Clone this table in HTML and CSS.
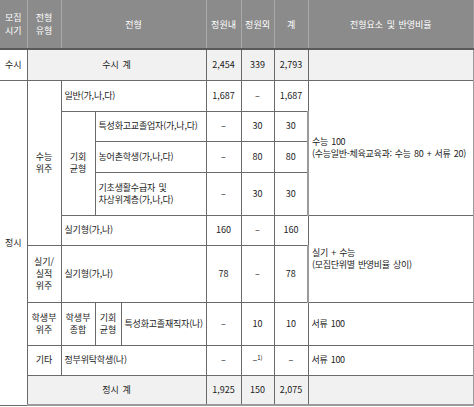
FILE: index.html
```html
<!DOCTYPE html>
<html lang="ko">
<head>
<meta charset="utf-8">
<link rel="stylesheet" href="styles.css">
</head>
<body>
<table class="tbl">
  <colgroup>
    <col class="w27"><col class="w34"><col class="w34"><col class="w26"><col class="w85">
    <col class="w35"><col class="w33"><col class="w34"><col class="w164">
  </colgroup>
  <thead>
    <tr class="h-head">
      <th>모집<br>시기</th>
      <th>전형<br>유형</th>
      <th colspan="3">전형</th>
      <th>정원내</th>
      <th>정원외</th>
      <th>계</th>
      <th>전형요소 및 반영비율</th>
    </tr>
  </thead>
  <tbody>
    <tr class="h31">
      <td class="c">수시</td>
      <td class="c sum" colspan="4">수시 계</td>
      <td class="c sum">2,454</td>
      <td class="c sum">339</td>
      <td class="c sum">2,793</td>
      <td class="sum"></td>
    </tr>
    <tr class="h31">
      <td class="c" rowspan="10">정시</td>
      <td class="c" rowspan="5">수능<br>위주</td>
      <td class="l" colspan="3">일반(가,나,다)</td>
      <td class="c">1,687</td>
      <td class="c">–</td>
      <td class="c">1,687</td>
      <td class="l note" rowspan="4">수능 100<br>(수능일반-체육교육과: 수능 80 + 서류 20)</td>
    </tr>
    <tr class="h30">
      <td class="c" rowspan="3">기회<br>균형</td>
      <td class="l" colspan="2">특성화고교졸업자(가,나,다)</td>
      <td class="c">–</td>
      <td class="c">30</td>
      <td class="c">30</td>
    </tr>
    <tr class="h31">
      <td class="l" colspan="2">농어촌학생(가,나,다)</td>
      <td class="c">–</td>
      <td class="c">80</td>
      <td class="c">80</td>
    </tr>
    <tr class="h43">
      <td class="l" colspan="2">기초생활수급자 및<br>차상위계층(가,나,다)</td>
      <td class="c">–</td>
      <td class="c">30</td>
      <td class="c">30</td>
    </tr>
    <tr class="h30">
      <td class="l" colspan="3">실기형(가,나)</td>
      <td class="c">160</td>
      <td class="c">–</td>
      <td class="c">160</td>
      <td class="l note" rowspan="2">실기 + 수능<br>(모집단위별 반영비율 상이)</td>
    </tr>
    <tr class="h57">
      <td class="c">실기/<br>실적<br>위주</td>
      <td class="l" colspan="3">실기형(가,나)</td>
      <td class="c">78</td>
      <td class="c">–</td>
      <td class="c">78</td>
    </tr>
    <tr class="h43">
      <td class="c">학생부<br>위주</td>
      <td class="c">학생부<br>종합</td>
      <td class="c">기회<br>균형</td>
      <td class="l">특성화고졸재직자(나)</td>
      <td class="c">–</td>
      <td class="c">10</td>
      <td class="c">10</td>
      <td class="l note">서류 100</td>
    </tr>
    <tr class="h30">
      <td class="c">기타</td>
      <td class="l" colspan="3">정부위탁학생(나)</td>
      <td class="c">–</td>
      <td class="c">–<sup class="fn">1)</sup></td>
      <td class="c">–</td>
      <td class="l note">서류 100</td>
    </tr>
    <tr class="h30 last">
      <td class="c sum" colspan="4">정시 계</td>
      <td class="c sum">1,925</td>
      <td class="c sum">150</td>
      <td class="c sum">2,075</td>
      <td class="sum"></td>
    </tr>
  </tbody>
</table>
</body>
</html>
```

FILE: styles.css
```css
html, body {
  margin: 0;
  padding: 0;
  background: #ffffff;
}

.tbl {
  border-collapse: collapse;
  table-layout: fixed;
  width: 474px;
  font-family: "Noto Sans CJK KR", "Liberation Sans", sans-serif;
  font-size: 9px;
  line-height: 12px;
  color: #222222;
  word-spacing: 1px;
}

.w27 { width: 27px; }
.w34 { width: 34px; }
.w26 { width: 26px; }
.w85 { width: 85px; }
.w35 { width: 35px; }
.w33 { width: 33px; }
.w164 { width: 166px; }

.tbl th {
  background: #8b8b8b;
  color: #ffffff;
  font-weight: normal;
  border-left: 1px solid #a9a9a9;
  border-right: 1px solid #a9a9a9;
  border-bottom: 2px solid #5a5a5a;
  padding: 0;
  text-align: center;
  vertical-align: middle;
  line-height: 13px;
}

.tbl th:first-child { border-left: none; }
.tbl th:last-child { border-right: 2px solid #9a9a9a; }

.h-head { height: 49px; }
.h30 { height: 30px; }
.h31 { height: 31px; }
.h43 { height: 43px; }
.h57 { height: 57px; }

.tbl td {
  border: 1px solid #6a6a6a;
  padding: 0 3px;
  vertical-align: middle;
  overflow: visible;
  white-space: nowrap;
}

.tbl tr td:first-child { border-left: none; }
.tbl td:last-child { border-right: 2px solid #9a9a9a; }

.tbl .last td { border-bottom: 2px solid #9a9a9a; }

.c { text-align: center; }
.l { text-align: left; letter-spacing: -0.2px; }
.note { letter-spacing: -0.3px; word-spacing: 1px; }

.sum { background: #f1f1f1; }

.fn {
  font-size: 6px;
  line-height: 0;
  vertical-align: 3px;
}
```
